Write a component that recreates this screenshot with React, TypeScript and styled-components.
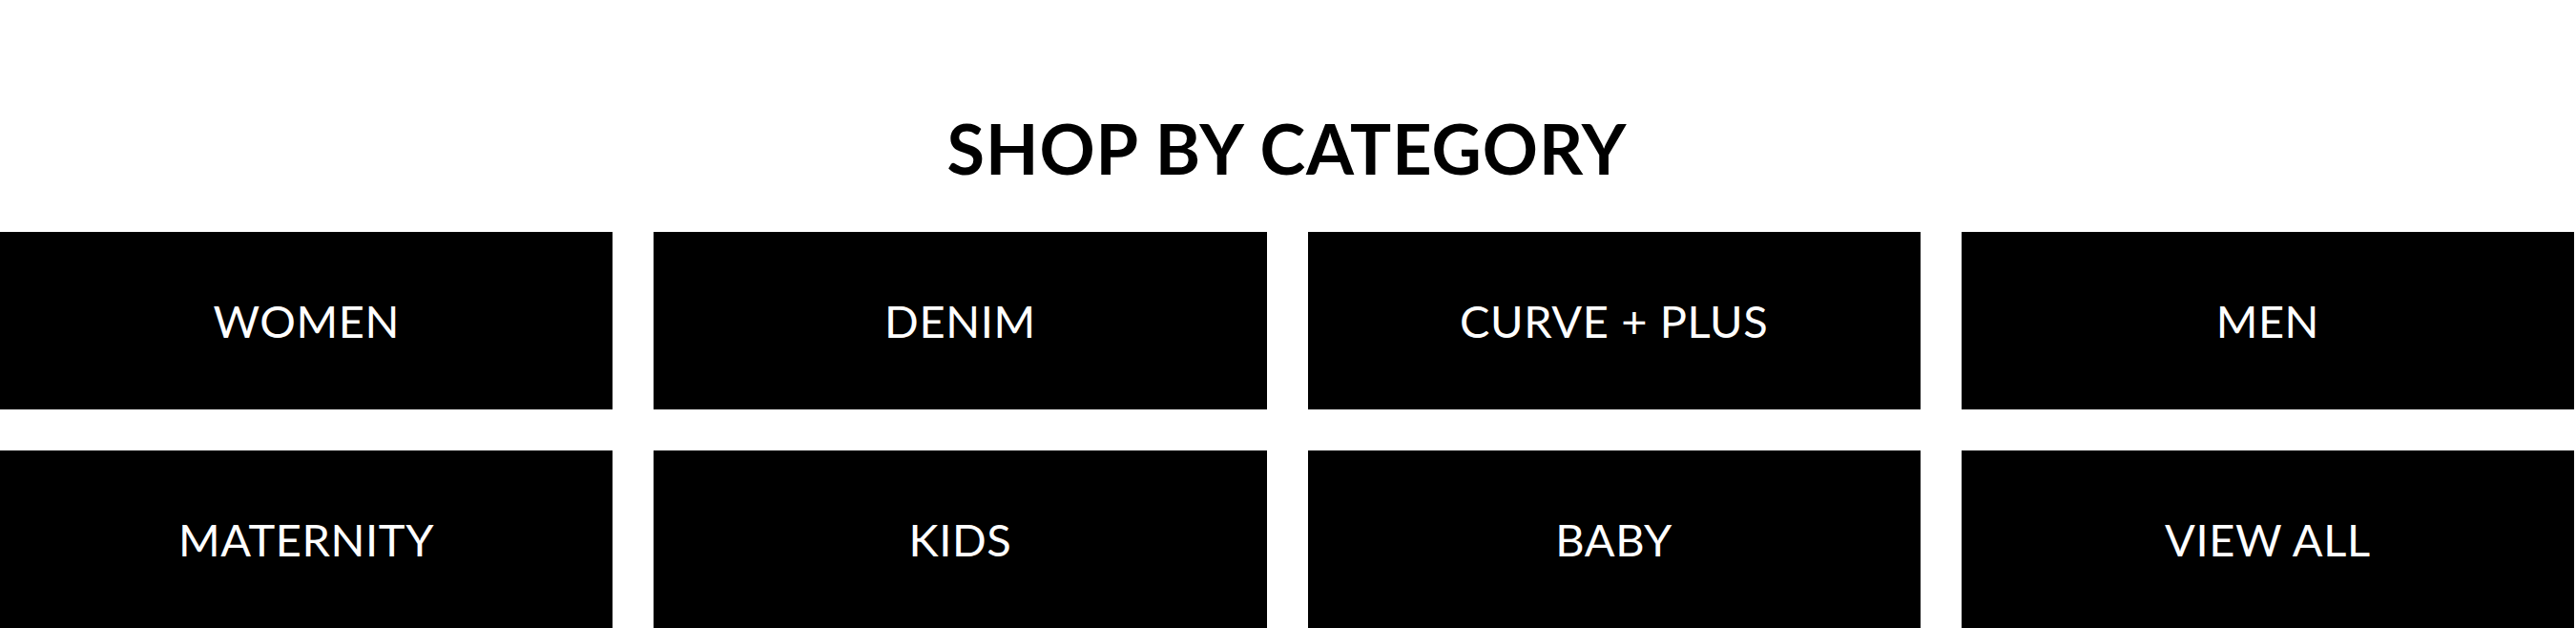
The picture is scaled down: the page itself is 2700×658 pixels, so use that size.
import styled, { createGlobalStyle } from "styled-components";

const GlobalStyle = createGlobalStyle`
  html, body {
    margin: 0;
    padding: 0;
    background: #fff;
  }

  body {
    font-family: Lato, "Open Sans", Arial, sans-serif;
    -webkit-font-smoothing: antialiased;
  }
`;

const StyledSection = styled.section`
  display: flex;
  flex-direction: column;
  align-items: center;
  padding-top: 119px;
  max-width: 2698px;
`;

const Heading = styled.h2`
  margin: 0 0 52px;
  font-family: Lato, Arial, sans-serif;
  font-weight: 700;
  font-size: 72px;
  line-height: 72px;
  color: #000;
  text-transform: uppercase;
  letter-spacing: 1px;
`;

const CategoryGrid = styled.div`
  width: 100%;
  display: grid;
  grid-template-columns: repeat(4, 1fr);
  column-gap: 43px;
  row-gap: 43px;
`;

const CategoryTile = styled.a`
  display: flex;
  align-items: center;
  justify-content: center;
  height: 186px;
  background: #000;
  color: #fff;
  text-decoration: none;
  font-family: Lato, Arial, sans-serif;
  font-weight: 400;
  font-size: 47px;
  letter-spacing: 0.6px;
  text-transform: uppercase;
  cursor: pointer;
`;

const categories = [
  "Women",
  "Denim",
  "Curve + Plus",
  "Men",
  "Maternity",
  "Kids",
  "Baby",
  "View All",
];

const App = () => {
  return (
    <>
      <GlobalStyle />
      <StyledSection>
        <Heading>Shop by Category</Heading>
        <CategoryGrid>
          {categories.map((name) => (
            <CategoryTile key={name} href="#">
              {name}
            </CategoryTile>
          ))}
        </CategoryGrid>
      </StyledSection>
    </>
  );
};

export default App;
